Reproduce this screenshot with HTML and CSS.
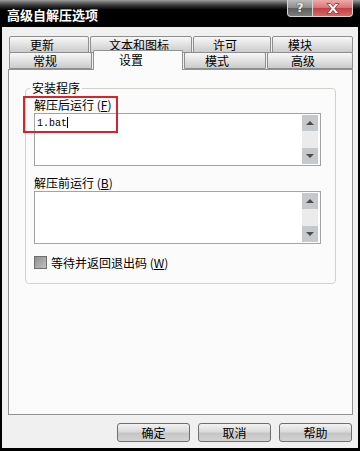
FILE: index.html
```html
<!DOCTYPE html>
<html lang="zh-CN">
<head>
<meta charset="utf-8">
<title>高级自解压选项</title>
<link rel="stylesheet" href="styles.css">
</head>
<body>
<div class="window">
  <div class="titlebar">
    <span class="title">高级自解压选项</span>
    <div class="caption">
      <div class="cap-btn help"><span class="q">?</span></div>
      <div class="cap-btn close">
        <svg width="14" height="11" viewBox="0 0 14 11"><path d="M1 0.5H4.6L7 3.6L9.4 0.5H13L8.8 5.5L13 10.5H9.4L7 7.4L4.6 10.5H1L5.2 5.5Z" fill="#fff" stroke="#8c2a2a" stroke-width="0.8"/></svg>
      </div>
    </div>
  </div>
  <div class="client">
    <div class="tabs">
      <div class="tabrow back">
        <div class="tab t1">更新</div>
        <div class="tab t2">文本和图标</div>
        <div class="tab t3">许可</div>
        <div class="tab t4">模块</div>
      </div>
      <div class="tabrow front">
        <div class="tab t5">常规</div>
        <div class="tab t6 sel">设置</div>
        <div class="tab t7">模式</div>
        <div class="tab t8">高级</div>
      </div>
    </div>
    <div class="panel">
      <fieldset class="group">
        <legend>安装程序</legend>
        <div class="lbl">解压后运行 (<u>F</u>)</div>
        <div class="edit">
          <div class="edit-text">1.bat<span class="caret"></span></div>
          <div class="vscroll">
            <div class="sb-btn"><span class="arr up"></span></div>
            <div class="sb-track"></div>
            <div class="sb-btn"><span class="arr down"></span></div>
          </div>
        </div>
        <div class="lbl lbl2">解压前运行 (<u>B</u>)</div>
        <div class="edit">
          <div class="edit-text"></div>
          <div class="vscroll">
            <div class="sb-btn"><span class="arr up"></span></div>
            <div class="sb-track"></div>
            <div class="sb-btn"><span class="arr down"></span></div>
          </div>
        </div>
        <div class="check-row">
          <span class="checkbox"></span>
          <span>等待并返回退出码 (<u>W</u>)</span>
        </div>
      </fieldset>
      <div class="annot"></div>
    </div>
    <div class="buttons">
      <div class="btn">确定</div>
      <div class="btn">取消</div>
      <div class="btn">帮助</div>
    </div>
  </div>
</div>
</body>
</html>
```
FILE: styles.css
```css
* { box-sizing: border-box; }
html, body { margin: 0; padding: 0; }
body {
  width: 360px; height: 451px; overflow: hidden; background: #000;
  font-family: "Noto Sans CJK SC", "Noto Sans", sans-serif;
  font-size: 12px; color: #000;
}
.window { width: 360px; height: 451px; display: flex; flex-direction: column; background: #000; }

.titlebar {
  height: 27px; flex: none; display: flex; align-items: flex-start;
  background: linear-gradient(#9c9c9c 0, #3c3c3c 5px, #000 10px);
}
.title { color: #fff; font-weight: bold; font-size: 13px; line-height: 17px; padding: 6px 0 0 7px; }
.caption { margin-left: auto; margin-right: 7px; display: flex; }
.cap-btn {
  height: 17px; display: flex; align-items: center; justify-content: center;
  border: 1px solid #d4d4d4; border-top: none;
}
.help {
  width: 26px; border-radius: 0 0 0 4px;
  background: linear-gradient(#bdbdbd, #8a8a8a 50%, #5e5e5e 51%, #7c7c7c);
}
.q {
  font-family: "DejaVu Sans", sans-serif; font-weight: bold; font-size: 13px; line-height: 14px;
  color: #ececec; text-shadow: 0 0 1px #333, 0 0 1px #333;
}
.close {
  width: 40px; border-left: none; border-radius: 0 0 4px 0;
  background: linear-gradient(#eeaaaa, #d87272 50%, #c44040 51%, #da6666);
}

.client {
  flex: none; height: 421px; margin: 0 2px; background: #f0f0f0;
  padding: 9px 0 6px 6px; display: flex; flex-direction: column;
}

.tabs { margin-left: 1px; width: 344px; }
.tabrow { display: flex; gap: 1px; height: 17px; }
.tabrow.front { margin-top: -1px; align-items: flex-end; position: relative; z-index: 2; }
.tab {
  height: 17px; border: 1px solid #8e8e8e; border-radius: 2px 2px 0 0;
  background: linear-gradient(#f7f7f7, #e4e4e4 45%, #cbcbcb);
  line-height: 15px; white-space: nowrap; flex: none;
}
.tab.sel { height: 20px; margin-bottom: -1px; background: #fbfbfb; border-color: #919191; border-bottom: none; line-height: 17px; }
.t1 { width: 80px; padding-left: 20px; }
.t2 { width: 102px; padding-left: 18px; }
.t3 { width: 78px; padding-left: 19px; }
.t4 { width: 81px; padding-left: 15px; }
.t5 { width: 83px; padding-left: 23px; }
.t6 { width: 90px; padding-left: 25px; }
.t7 { width: 82px; padding-left: 20px; }
.t8 { width: 86px; padding-left: 23px; }

.panel {
  position: relative; flex: none; width: 345px; height: 346px;
  border: 1px solid #919191; background: #fbfbfb;
}
.group {
  margin: 11px 16px 0 16px; padding: 0 14px 14px 8px;
  border: 1px solid #d2d2ca; border-radius: 4px; min-width: 0;
}
.group legend { padding: 0 2px; margin-left: -4px; line-height: 14px; }
.lbl { line-height: 14px; margin-top: 3px; }
.lbl2 { margin-top: 10px; }
u { text-underline-offset: 1px; }

.edit {
  margin-top: 1px; height: 53px; border: 1px solid #a3a3a3; background: #fff; display: flex;
}
.edit-text {
  flex: 1; padding: 3px 0 0 2px;
  font-family: "Liberation Mono", monospace; font-size: 10px; line-height: 12px;
}
.caret { display: inline-block; width: 1px; height: 11px; background: #000; vertical-align: -2px; }
.vscroll { width: 16px; margin: 1px 2px 1px 0; display: flex; flex-direction: column; }
.sb-btn { height: 16px; flex: none; background: #c5c9cc; display: flex; align-items: center; justify-content: center; }
.sb-track { flex: 1; background: #ebebeb; }
.arr { width: 0; height: 0; border-left: 4px solid transparent; border-right: 4px solid transparent; }
.arr.up { border-bottom: 4px solid #4c4c4c; }
.arr.down { border-top: 4px solid #4c4c4c; }

.check-row { margin-top: 12px; display: flex; align-items: center; gap: 4px; height: 13px; line-height: 13px; }
.checkbox {
  width: 13px; height: 13px; flex: none; border: 1px solid #6e6e6e;
  background: linear-gradient(135deg, #8e8e8e, #c2c2c2);
}

.annot {
  position: absolute; left: 14px; top: 26px; width: 95px; height: 37px;
  border: 2px solid #d3252a;
}

.buttons {
  display: flex; justify-content: flex-end; gap: 8px;
  width: 345px; padding-right: 1px; margin-top: 8px;
}
.btn {
  width: 73px; height: 19px; border: 1px solid #6f6f6f; border-radius: 3px;
  background: linear-gradient(#f2f2f2, #dadada 45%, #c6c6c6 55%, #d2d2d2);
  display: flex; align-items: center; justify-content: center; line-height: 14px;
}
```
